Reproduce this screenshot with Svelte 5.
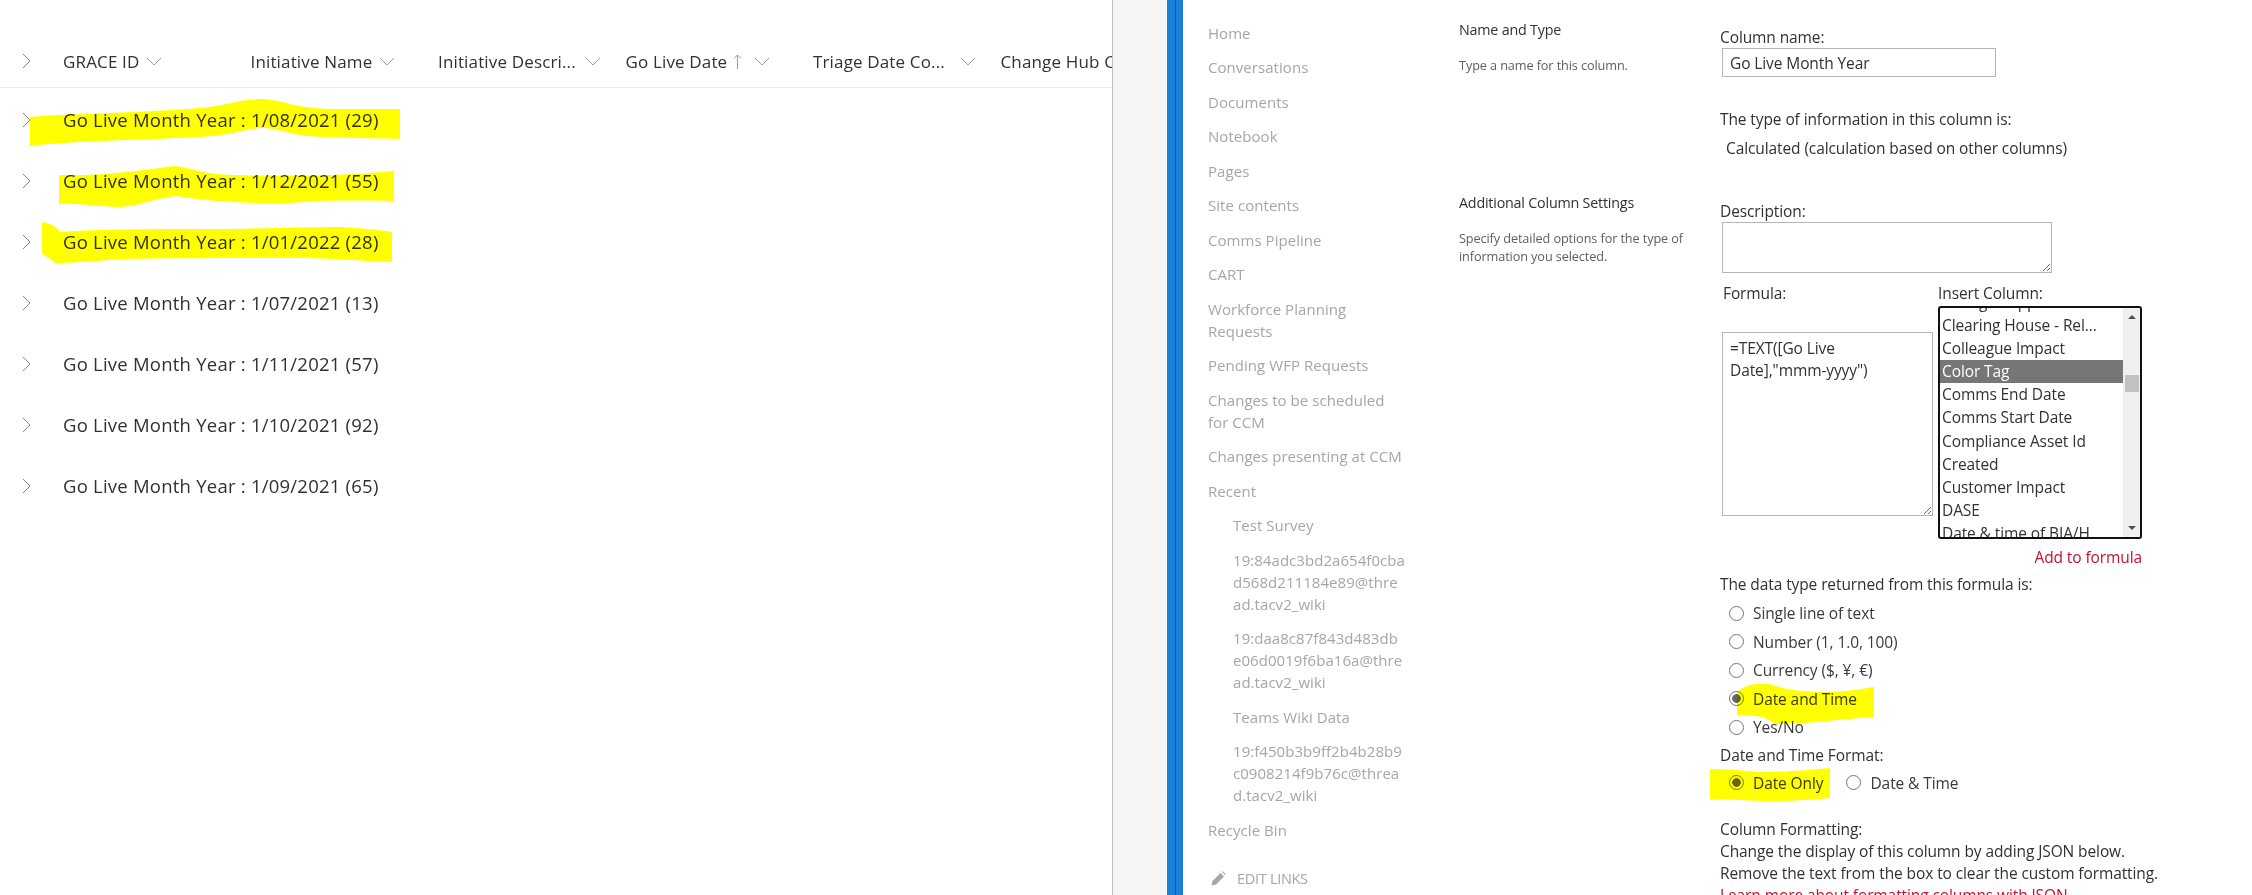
<script>
	const columns = [
		{ name: 'GRACE ID' },
		{ name: 'Initiative Name' },
		{ name: 'Initiative Descri...', clipped: true },
		{ name: 'Go Live Date', sorted: true },
		{ name: 'Triage Date Co...', clipped: true },
		{ name: 'Change Hub C', cut: true }
	];

	const groups = [
		'1/08/2021 (29)',
		'1/12/2021 (55)',
		'1/01/2022 (28)',
		'1/07/2021 (13)',
		'1/11/2021 (57)',
		'1/10/2021 (92)',
		'1/09/2021 (65)'
	];

	const nav = [
		{ text: 'Home' },
		{ text: 'Conversations' },
		{ text: 'Documents' },
		{ text: 'Notebook' },
		{ text: 'Pages' },
		{ text: 'Site contents' },
		{ text: 'Comms Pipeline' },
		{ text: 'CART' },
		{ text: 'Workforce Planning\nRequests' },
		{ text: 'Pending WFP Requests' },
		{ text: 'Changes to be scheduled\nfor CCM' },
		{ text: 'Changes presenting at CCM' },
		{ text: 'Recent' },
		{ text: 'Test Survey', sub: true },
		{ text: '19:84adc3bd2a654f0cba\nd568d211184e89@thre\nad.tacv2_wiki', sub: true },
		{ text: '19:daa8c87f843d483db\ne06d0019f6ba16a@thre\nad.tacv2_wiki', sub: true },
		{ text: 'Teams Wiki Data', sub: true },
		{ text: '19:f450b3b9ff2b4b28b9\nc0908214f9b76c@threa\nd.tacv2_wiki', sub: true },
		{ text: 'Recycle Bin' }
	];

	const insertColumns = [
		'Change Support',
		'Clearing House - Rel...',
		'Colleague Impact',
		'Color Tag',
		'Comms End Date',
		'Comms Start Date',
		'Compliance Asset Id',
		'Created',
		'Customer Impact',
		'DASE',
		'Date & time of BIA/H'
	];

	const returnTypes = [
		{ label: 'Single line of text' },
		{ label: 'Number (1, 1.0, 100)' },
		{ label: 'Currency ($, ¥, €)' },
		{ label: 'Date and Time', checked: true },
		{ label: 'Yes/No' }
	];

	const formula = '=TEXT([Go Live\nDate],"mmm-yyyy")';
</script>

<div class="page">
	<section class="list">
		<div class="head">
			<svg class="expand" viewBox="0 0 9 16"><path d="M1 1l7 7-7 7" /></svg>
			<div class="cols">
				{#each columns as col}
					<div class="col">
						<span class="name">{col.name}</span>
						{#if col.sorted}
							<svg class="sort" viewBox="0 0 9 16"><path d="M4.5 15V1M1 4.5L4.5 1 8 4.5" /></svg>
						{/if}
						{#if !col.cut}
							<svg class="chev" class:wide={col.clipped} viewBox="0 0 16 9"><path d="M1 1l7 7 7-7" /></svg>
						{/if}
					</div>
				{/each}
			</div>
		</div>
		{#each groups as group}
			<div class="group">
				<svg class="expand" viewBox="0 0 9 16"><path d="M1 1l7 7-7 7" /></svg>
				<span>Go Live Month Year : {group}</span>
			</div>
		{/each}
	</section>

	<div class="gutter"></div>
	<div class="bar"><div class="bar-line"></div></div>

	<section class="panel">
		<nav class="nav">
			{#each nav as item}
				<div class="nav-item" class:sub={item.sub}>{item.text}</div>
			{/each}
			<div class="edit">
				<svg viewBox="0 0 15 15"><path d="M0.5 14.5l1-4.5 8-8 3.5 3.5-8 8zM10.8 0.8l1-.6 2.8 2.8-.6 1z" /></svg>
				<span>EDIT LINKS</span>
			</div>
		</nav>

		<div class="about">
			<h3>Name and Type</h3>
			<p>Type a name for this column.</p>
			<h3 class="second">Additional Column Settings</h3>
			<p>Specify detailed options for the type of<br />information you selected.</p>
		</div>

		<form class="form">
			<div class="label">Column name:</div>
			<input class="field" type="text" value="Go Live Month Year" />
			<div class="label type-label">The type of information in this column is:</div>
			<div class="label calculated">Calculated (calculation based on other columns)</div>
			<div class="label desc-label">Description:</div>
			<textarea class="field desc"></textarea>

			<div class="formula-row">
				<div class="formula-col">
					<div class="label">Formula:</div>
					<textarea class="field formula" value={formula}></textarea>
				</div>
				<div class="insert-col">
					<div class="label">Insert Column:</div>
					<div class="listbox">
						<div class="options">
							{#each insertColumns as option}
								<div class="option" class:selected={option === 'Color Tag'}>{option}</div>
							{/each}
						</div>
						<div class="scroll">
							<span class="arrow up"></span>
							<span class="thumb"></span>
							<span class="arrow down"></span>
						</div>
					</div>
					<div class="add">Add to formula</div>
				</div>
			</div>

			<div class="label">The data type returned from this formula is:</div>
			<div class="radios">
				{#each returnTypes as type}
					<div class="radio-row">
						<span class="radio" class:checked={type.checked}></span>
						<span>{type.label}</span>
					</div>
				{/each}
			</div>
			<div class="label format-label">Date and Time Format:</div>
			<div class="radio-row inline">
				<span class="radio checked"></span>
				<span class="only">Date Only</span>
				<span class="radio"></span>
				<span>Date &amp; Time</span>
			</div>
			<div class="label formatting">Column Formatting:</div>
			<div class="label">Change the display of this column by adding JSON below.</div>
			<div class="label">Remove the text from the box to clear the custom formatting.</div>
			<div class="label learn">Learn more about formatting columns with JSON</div>
		</form>
	</section>

	<!-- marker strokes drawn over the screenshot -->
	<svg class="marker" viewBox="0 0 2252 895">
		<path d="M30 146L30 117C60 114 140 113 199 108C225 106 240 99 262 99C285 100 295 109 335 109L400 109L400 139C365 138 320 138 300 135C285 132 275 128 262 128C245 129 235 135 200 137C140 140 70 141 30 146Z" />
		<path d="M59 175C100 176 130 172 174 166C195 168 200 175 240 175C300 177 350 175 394 171L394 201C350 200 320 200 290 203C250 204 215 202 176 196C155 198 140 206 120 207C100 207 80 203 59 204Z" />
		<path d="M42 222C50 223 56 226 60 232C100 229 150 229 200 229C260 229 300 227 340 227C360 228 380 230 392 232L392 262C360 261 330 258 300 258C250 258 180 258 120 259C100 261 70 263 55 263C50 258 44 256 42 253Z" />
		<path d="M1737 693C1745 684 1755 683 1770 684C1780 688 1795 692 1825 692C1845 692 1860 689 1874 687L1874 717C1860 718 1835 720 1820 722C1800 723 1785 724 1775 724C1768 720 1765 716 1755 716L1737 715Z" />
		<path d="M1710 769C1730 769 1745 771 1760 772C1785 772 1810 770 1830 768L1830 798C1810 800 1790 801 1770 801C1750 801 1730 799 1710 799Z" />
	</svg>
</div>

<style>
	:global(body) {
		margin: 0;
		background: #fff;
	}

	.page {
		position: relative;
		display: flex;
		width: 2252px;
		height: 895px;
		overflow: hidden;
		font-family: 'Open Sans', 'Noto Sans', sans-serif;
		color: #323130;
	}

	/* list view */
	.list {
		flex: 0 0 1112px;
		box-sizing: content-box;
		overflow: hidden;
		border-right: 1px solid #bdbdbd;
	}
	.head {
		display: flex;
		align-items: center;
		height: 88px;
		padding-top: 36px;
		box-sizing: border-box;
		border-bottom: 1px solid #edebe9;
		font-size: 17px;
		letter-spacing: 0.15px;
	}
	.expand {
		flex: none;
		width: 9px;
		height: 16px;
		margin: 0 32px 0 22px;
		fill: none;
		stroke: #8a8886;
		stroke-width: 1;
	}
	.head .expand {
		margin-top: -2px;
	}
	.cols {
		display: flex;
		flex: none;
	}
	.col {
		display: flex;
		align-items: center;
		flex: none;
		width: 187.5px;
		white-space: nowrap;
	}
	.chev {
		flex: none;
		width: 16px;
		height: 9px;
		margin-left: 7px;
		fill: none;
		stroke: #a19f9d;
		stroke-width: 1;
	}
	.chev.wide {
		margin-left: auto;
		margin-right: 25px;
	}
	.sort {
		flex: none;
		width: 9px;
		height: 16px;
		margin-left: 6px;
		margin-right: 5px;
		fill: none;
		stroke: #a19f9d;
		stroke-width: 1;
	}
	.group {
		display: flex;
		align-items: center;
		height: 61px;
		font-size: 18.5px;
		letter-spacing: 0.23px;
		white-space: nowrap;
	}
	.group:nth-child(2) {
		margin-top: 1px;
	}

	/* suite bar */
	.gutter {
		flex: 0 0 54px;
		background: #f5f5f5;
	}
	.bar {
		flex: 0 0 16px;
		display: flex;
		justify-content: center;
		background: #1a7fd6;
	}
	.bar-line {
		width: 1px;
		background: #4a4a4a;
	}

	/* settings page */
	.panel {
		flex: 1;
		display: grid;
		grid-template-columns: 251px 261px 1fr;
		padding-left: 25px;
		min-width: 0;
	}
	.nav {
		display: flex;
		flex-direction: column;
		gap: 12.5px;
		padding-top: 21.5px;
		font-size: 15px;
		line-height: 22px;
		letter-spacing: 0.05px;
		color: #a6a6a6;
	}
	.nav-item {
		white-space: pre-line;
	}
	.nav-item.sub {
		padding-left: 25px;
	}
	.edit {
		display: flex;
		align-items: center;
		gap: 11px;
		margin-top: 14.5px;
		padding-left: 3px;
		font-size: 14.5px;
		letter-spacing: -0.3px;
	}
	.edit svg {
		width: 15px;
		height: 15px;
		fill: #a6a6a6;
	}
	.about {
		padding-top: 20px;
	}
	.about h3 {
		margin: 0;
		font-size: 14.3px;
		font-weight: 400;
		line-height: 20px;
		letter-spacing: -0.2px;
	}
	.about p {
		margin: 16px 0 0;
		font-size: 12.7px;
		line-height: 18px;
		letter-spacing: -0.1px;
		color: #605e5c;
	}
	.about h3.second {
		margin-top: 119px;
	}
	.form {
		padding-top: 26px;
		font-size: 15.5px;
		line-height: 22px;
		letter-spacing: -0.1px;
	}
	.label {
		white-space: nowrap;
	}
	.field {
		display: block;
		margin: 0 0 0 2px;
		box-sizing: border-box;
		border: 1px solid #b5b5b5;
		border-radius: 0;
		padding: 0 7px;
		font: inherit;
		letter-spacing: inherit;
		color: inherit;
		background: #fff;
		outline: none;
	}
	input.field {
		width: 274px;
		height: 29px;
	}
	.type-label {
		margin-top: 31px;
	}
	.calculated {
		margin: 7px 0 0 6px;
	}
	.desc-label {
		margin-top: 41px;
	}
	.desc {
		width: 330px;
		height: 51px;
	}
	.formula-row {
		display: flex;
		margin-top: 9px;
		margin-bottom: 5px;
	}
	.formula-col {
		flex: 0 0 218px;
		padding-left: 3px;
		box-sizing: border-box;
	}
	.formula {
		width: 211px;
		height: 184px;
		margin: 28px 0 0 -1px;
		padding: 4px 7px;
	}
	.insert-col {
		width: 204px;
	}
	.listbox {
		display: flex;
		box-sizing: border-box;
		height: 233px;
		margin-top: 2px;
		border: 2px solid #111;
		border-radius: 3px;
		overflow: hidden;
	}
	.options {
		flex: 1;
		min-width: 0;
		margin-top: -17.5px;
	}
	.option {
		height: 23.2px;
		padding-left: 2px;
		line-height: 23px;
		white-space: nowrap;
		overflow: hidden;
	}
	.option.selected {
		background: #767676;
		color: #fff;
	}
	.scroll {
		position: relative;
		flex: 0 0 17px;
		background: #f0f0f0;
	}
	.thumb {
		position: absolute;
		left: 2px;
		right: 1px;
		top: 67px;
		height: 17px;
		background: #c1c1c1;
	}
	.arrow {
		position: absolute;
		left: 5px;
		width: 0;
		height: 0;
		border-left: 4px solid transparent;
		border-right: 4px solid transparent;
	}
	.arrow.up {
		top: 7px;
		border-bottom: 4px solid #505050;
	}
	.arrow.down {
		bottom: 7px;
		border-top: 4px solid #505050;
	}
	.add {
		margin-top: 7px;
		text-align: right;
		color: #c8102e;
	}
	.radios {
		margin-top: 4px;
	}
	.radio-row {
		display: flex;
		align-items: center;
		height: 28.5px;
		padding-left: 9px;
		gap: 9px;
		color: #3b3a39;
	}
	.radio {
		flex: none;
		box-sizing: border-box;
		width: 15px;
		height: 15px;
		border: 1.5px solid #767676;
		border-radius: 50%;
		background: #fff;
	}
	.radio.checked {
		background: radial-gradient(circle, #666 0 4px, #fff 4.6px);
	}
	.format-label {
		margin-top: 2px;
	}
	.radio-row.inline {
		margin-top: 3px;
	}
	.only {
		margin-right: 14px;
	}
	.formatting {
		margin-top: 21px;
	}
	.learn {
		color: #c8102e;
	}

	.marker {
		position: absolute;
		inset: 0;
		width: 2252px;
		height: 895px;
		fill: #ffff00;
		mix-blend-mode: multiply;
		pointer-events: none;
	}
</style>
